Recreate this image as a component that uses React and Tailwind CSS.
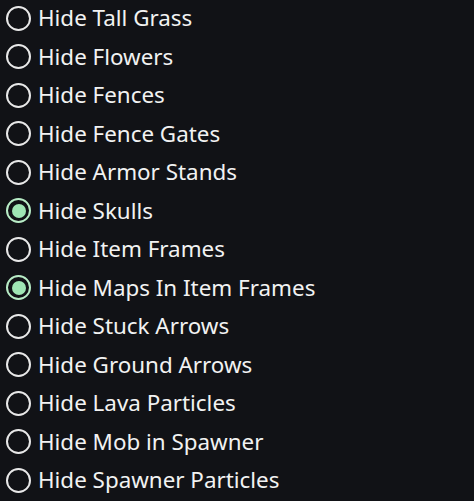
import React from "react";

const options = [
  { label: "Hide Tall Grass", on: false },
  { label: "Hide Flowers", on: false },
  { label: "Hide Fences", on: false },
  { label: "Hide Fence Gates", on: false },
  { label: "Hide Armor Stands", on: false },
  { label: "Hide Skulls", on: true },
  { label: "Hide Item Frames", on: false },
  { label: "Hide Maps In Item Frames", on: true },
  { label: "Hide Stuck Arrows", on: false },
  { label: "Hide Ground Arrows", on: false },
  { label: "Hide Lava Particles", on: false },
  { label: "Hide Mob in Spawner", on: false },
  { label: "Hide Spawner Particles", on: false },
];

const Radio = ({ on }) =>
  on ? (
    <span className="flex h-[25px] w-[25px] shrink-0 items-center justify-center rounded-full border-2 border-[#b8ecc6]">
      <span className="h-[14px] w-[14px] rounded-full bg-[#9fe6b4]" />
    </span>
  ) : (
    <span className="h-[25px] w-[25px] shrink-0 rounded-full border-2 border-[#e8e8e8]" />
  );

export default function App() {
  return (
    <div
      className="h-[501px] w-[474px] overflow-hidden bg-[#111216] pl-[6px] text-[#f2f2f2]"
      style={{ fontFamily: '"Noto Sans", "Open Sans", sans-serif' }}
    >
      <div className="-mt-[1px]">
        {options.map((o) => (
          <div key={o.label} className="flex h-[38.5px] items-center gap-[7px]">
            <Radio on={o.on} />
            <span className="text-[22.4px] leading-none">{o.label}</span>
          </div>
        ))}
      </div>
    </div>
  );
}
